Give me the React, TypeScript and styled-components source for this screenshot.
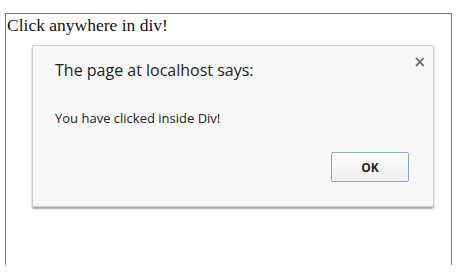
import React from "react";
import styled, { createGlobalStyle } from "styled-components";

const GlobalStyle = createGlobalStyle`
  html, body {
    margin: 0;
    padding: 0;
    background: #ffffff;
  }
`;

const Page = styled.div`
  position: relative;
  width: 474px;
  height: 278px;
  padding: 13px 0 0 5px;
  box-sizing: border-box;
`;

const ClickArea = styled.div`
  width: 447px;
  height: 252px;
  box-sizing: border-box;
  border: 1px solid #c25f5a;
  border-bottom: none;
  padding: 1px 0 0 1px;
  font-family: "Liberation Serif", "Times New Roman", serif;
  font-size: 17.5px;
  line-height: 20px;
  color: #111;
`;

const Dialog = styled.div`
  position: absolute;
  left: 32px;
  top: 45px;
  width: 402px;
  height: 162px;
  box-sizing: border-box;
  background: #f8f8f8;
  border: 1px solid #cfcfcf;
  border-radius: 2px;
  box-shadow: 0 2px 2px rgba(0, 0, 0, 0.35);
  padding: 13px 24px 24px 22px;
  display: flex;
  flex-direction: column;
  font-family: "Open Sans", "Noto Sans", sans-serif;
`;

const Title = styled.div`
  font-size: 16px;
  line-height: 22px;
  color: #222;
`;

const Message = styled.div`
  margin-top: 28px;
  font-size: 13px;
  line-height: 18px;
  color: #222;
`;

const Footer = styled.div`
  margin-top: auto;
  display: flex;
  justify-content: flex-end;
`;

const OkButton = styled.button`
  width: 78px;
  height: 30px;
  box-sizing: border-box;
  border: 1px solid #8aa3c8;
  border-radius: 2px;
  background: linear-gradient(#fdfdfd, #f1f1f1);
  font-family: "Open Sans", "Noto Sans", sans-serif;
  font-weight: 700;
  font-size: 12px;
  color: #222;
  cursor: pointer;
`;

const CloseButton = styled.span`
  position: absolute;
  top: 8px;
  right: 7px;
  font-family: "DejaVu Sans", sans-serif;
  font-weight: 700;
  font-size: 15px;
  line-height: 16px;
  color: #6f6f6f;
`;

export default function App() {
  return (
    <>
      <GlobalStyle />
      <Page>
        <ClickArea>Click anywhere in div!</ClickArea>
        <Dialog>
          <CloseButton>×</CloseButton>
          <Title>The page at localhost says:</Title>
          <Message>You have clicked inside Div!</Message>
          <Footer>
            <OkButton>OK</OkButton>
          </Footer>
        </Dialog>
      </Page>
    </>
  );
}
